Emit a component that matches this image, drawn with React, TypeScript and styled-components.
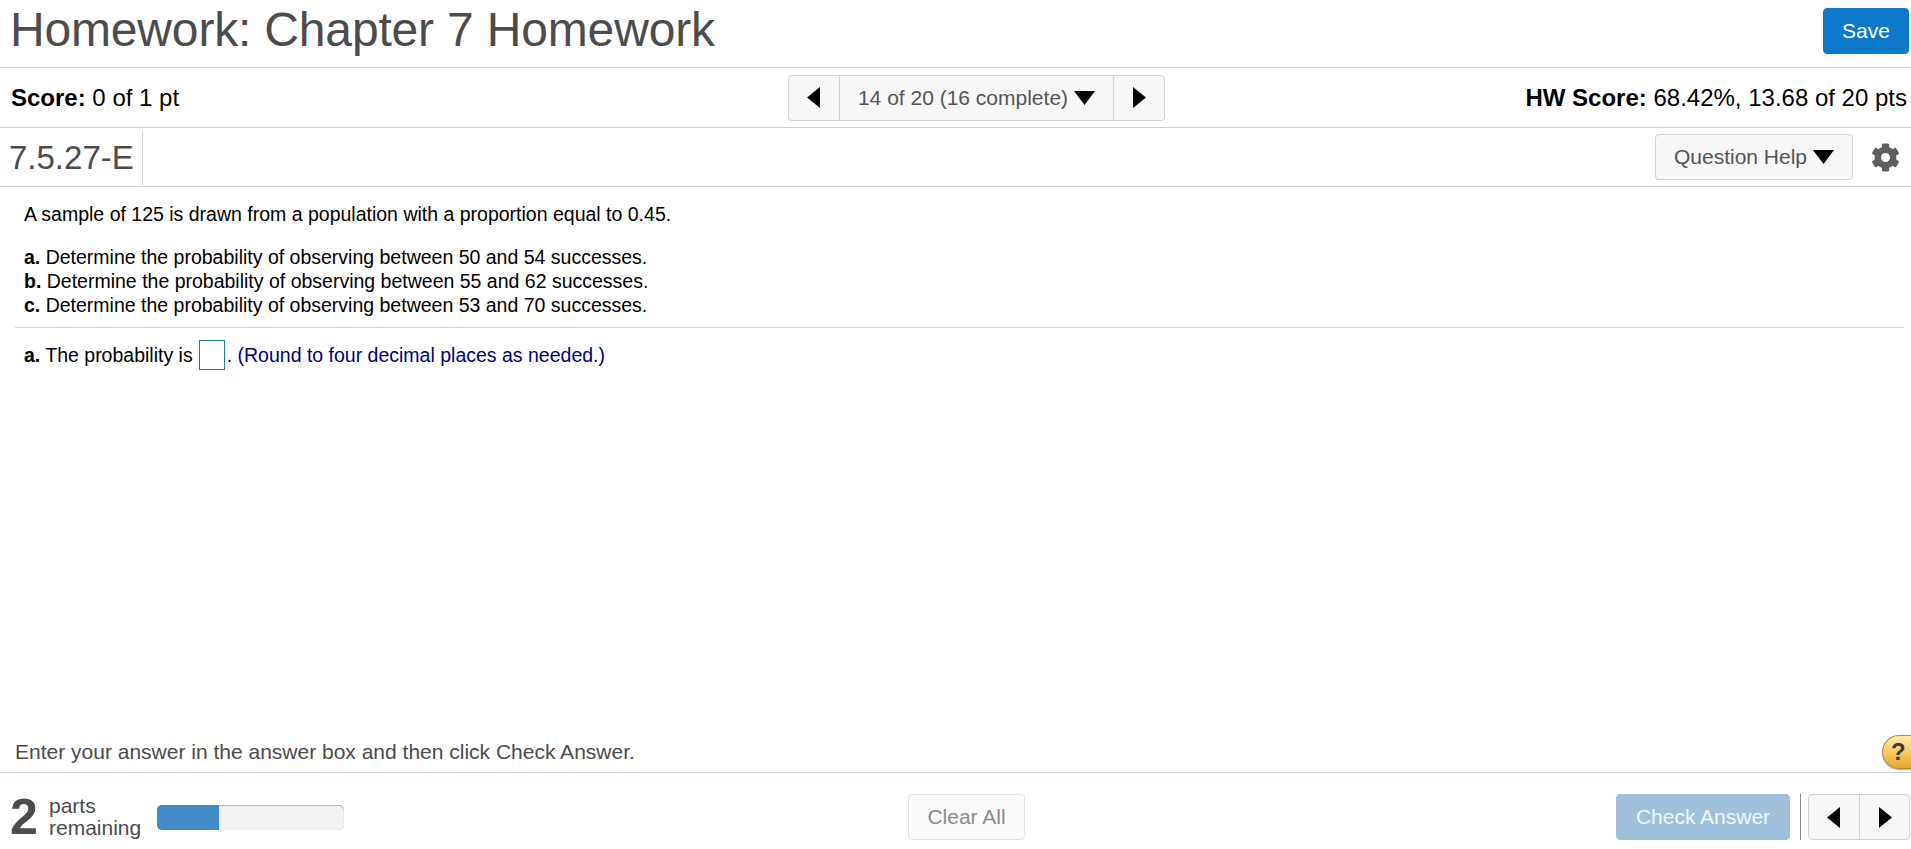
import React from "react";
import styled, { createGlobalStyle } from "styled-components";
import { FaCog } from "react-icons/fa";

const Global = createGlobalStyle`
  html, body { margin: 0; padding: 0; height: 100%; background: #fff; }
  body { font-family: "Liberation Sans", Arial, sans-serif; overflow: hidden; }
  * { box-sizing: border-box; }
`;

const Page = styled.div`
  height: 849px;
  display: flex;
  flex-direction: column;
`;

const Row = styled.div<{ $h: number }>`
  height: ${(p) => p.$h}px;
  flex: none;
  display: flex;
  align-items: center;
  border-bottom: 1px solid #cfd0dd;
`;

const TitleRow = styled(Row)`
  justify-content: space-between;
  padding: 0 2px 5px 10px;
`;

const Title = styled.h1`
  margin: 0 0 2px;
  font-size: 48px;
  font-weight: 400;
  line-height: 60px;
  letter-spacing: -0.17px;
  color: #4c4c4c;
`;

const BaseButton = styled.button`
  height: 46px;
  border-radius: 4px;
  font-family: inherit;
  font-size: 21px;
  padding: 0;
`;

const SaveButton = styled(BaseButton)`
  width: 86px;
  background: #0f79c9;
  border: 1px solid #0f79c9;
  color: #fff;
`;

const ScoreRow = styled(Row)`
  display: grid;
  grid-template-columns: 777px auto 1fr;
  padding: 0 4px 0 11px;
`;

const Score = styled.div<{ $right?: boolean }>`
  font-size: 24px;
  color: #000;
  text-align: ${(p) => (p.$right ? "right" : "left")};
  b { font-weight: 700; }
`;

const Group = styled.div`
  display: flex;
  height: 46px;
  border: 1px solid #d2d2d2;
  border-radius: 4px;
  background: #f7f7f7;
`;

const GroupCell = styled.div<{ $w: number; $sep?: boolean }>`
  width: ${(p) => p.$w}px;
  display: flex;
  align-items: center;
  justify-content: center;
  gap: 6px;
  font-size: 21px;
  color: #555;
  border-left: ${(p) => (p.$sep ? "1px solid #d2d2d2" : "none")};
`;

const Arrow = styled.svg`
  display: block;
  flex: none;
`;

const Left = () => (
  <Arrow width="14" height="21" viewBox="0 0 14 21"><path d="M13 0v21L0 10.500z" fill="#000" /></Arrow>
);
const Right = () => (
  <Arrow width="14" height="21" viewBox="0 0 14 21"><path d="M1 0v21l13-10.500z" fill="#000" /></Arrow>
);
const Down = () => (
  <Arrow width="21" height="14" viewBox="0 0 21 14"><path d="M0 0h21L10.500 14z" fill="#000" /></Arrow>
);

const QuestionRow = styled(Row)`
  justify-content: space-between;
  padding: 0 11px 0 9px;
`;

const QuestionId = styled.div`
  height: 54px;
  margin-top: 2px;
  padding-right: 8px;
  border-right: 1px solid #d4d4d4;
  font-size: 33px;
  line-height: 54px;
  color: #4c4c4c;
`;

const QuestionTools = styled.div`
  display: flex;
  align-items: center;
  gap: 18px;
`;

const HelpButton = styled(BaseButton)`
  width: 198px;
  background: #f7f7f7;
  border: 1px solid #d2d2d2;
  color: #555;
  display: flex;
  align-items: center;
  justify-content: center;
  gap: 6px;
`;

const Gear = styled(FaCog)`
  display: block;
  width: 29px;
  height: 29px;
  color: #5f5f5f;
`;

const Body = styled.main`
  flex: 1;
  display: flex;
  flex-direction: column;
`;

const Question = styled.div`
  font-size: 19.5px;
  line-height: 24px;
  color: #000;
  border-bottom: 1px solid #d2d4dc;
  margin: 0 7px 0 15px;
  padding: 15px 0 10px 9px;
  b { font-weight: 700; }
`;

const Para = styled.p`
  margin: 0 0 19px;
  &:last-child { margin-bottom: 0; }
`;

const Answer = styled.div`
  padding: 12px 0 0 24px;
  font-size: 19.5px;
  line-height: 30px;
  color: #000;
  display: flex;
  align-items: center;
  b { font-weight: 700; margin-right: 5px; }
`;

const AnswerBox = styled.span`
  width: 26px;
  height: 30px;
  margin: 0 2px 0 6px;
  border: 1px solid #1d7ea8;
  background: #fff;
`;

const Hint = styled.span`
  color: #000080;
`;

const Prompt = styled.div`
  flex: none;
  height: 52px;
  padding: 10px 0 0 15px;
  display: flex;
  align-items: center;
  justify-content: space-between;
  font-size: 21px;
  color: #4c4c4c;
  border-bottom: 1px solid #c9d0e0;
  overflow: hidden;
`;

const HelpBall = styled.div`
  width: 29px;
  height: 34px;
  border-radius: 17px 0 0 17px;
  background: linear-gradient(#fdeaa8, #f6c95c 55%, #e4a531);
  border: 1px solid #b98a2c;
  border-right: 0;
  box-shadow: 0 1px 1px rgba(0, 0, 0, 0.3);
  color: #3a3a3a;
  font-weight: 700;
  font-size: 24px;
  line-height: 32px;
  padding-left: 8px;
`;

const Footer = styled.footer`
  flex: none;
  height: 76px;
  display: grid;
  grid-template-columns: 898px auto 1fr;
  align-items: center;
  padding: 12px 1px 0 10px;
`;

const Parts = styled.div`
  display: flex;
  align-items: center;
`;

const PartsCount = styled.div`
  font-size: 50px;
  font-weight: 700;
  color: #4c4c4c;
  line-height: 50px;
  width: 28px;
`;

const PartsLabel = styled.div`
  margin-left: 11px;
  font-size: 21px;
  line-height: 22px;
  color: #4c4c4c;
`;

const Progress = styled.div`
  width: 187px;
  height: 25px;
  margin-left: 16px;
  background: #f2f2f2;
  border-radius: 5px;
  overflow: hidden;
  box-shadow: inset 0 1px 1px rgba(0, 0, 0, 0.25), inset 0 0 1px rgba(0, 0, 0, 0.2);
`;

const ProgressFill = styled.div<{ $pct: number }>`
  width: ${(p) => p.$pct}%;
  height: 100%;
  background: #428bca;
`;

const ClearButton = styled(BaseButton)`
  width: 117px;
  background: #fafafa;
  border: 1px solid #e2e2e2;
  color: #8c8c8c;
`;

const FooterRight = styled.div`
  display: flex;
  justify-content: flex-end;
  align-items: center;
`;

const CheckButton = styled(BaseButton)`
  width: 174px;
  background: #9fc1db;
  border: 1px solid #9fc1db;
  color: #f0f6fb;
`;

const Divider = styled.div`
  width: 1px;
  height: 46px;
  margin: 0 7px 0 10px;
  background: #8a8a8a;
`;

export default function App() {
  return (
    <Page>
      <Global />
      <TitleRow $h={68}>
        <Title>Homework: Chapter 7 Homework</Title>
        <SaveButton>Save</SaveButton>
      </TitleRow>
      <ScoreRow $h={60}>
        <Score><b>Score:</b> 0 of 1 pt</Score>
        <Group>
          <GroupCell $w={50}><Left /></GroupCell>
          <GroupCell $w={274} $sep>14 of 20 (16 complete)<Down /></GroupCell>
          <GroupCell $w={51} $sep><Right /></GroupCell>
        </Group>
        <Score $right><b>HW Score:</b> 68.42%, 13.68 of 20 pts</Score>
      </ScoreRow>
      <QuestionRow $h={59}>
        <QuestionId>7.5.27-E</QuestionId>
        <QuestionTools>
          <HelpButton>Question Help<Down /></HelpButton>
          <Gear />
        </QuestionTools>
      </QuestionRow>
      <Body>
        <Question>
          <Para>A sample of 125 is drawn from a population with a proportion equal to 0.45.</Para>
          <Para>
            <b>a.</b> Determine the probability of observing between 50 and 54 successes.<br />
            <b>b.</b> Determine the probability of observing between 55 and 62 successes.<br />
            <b>c.</b> Determine the probability of observing between 53 and 70 successes.
          </Para>
        </Question>
        <Answer>
          <b>a.</b> The probability is<AnswerBox />.&nbsp;<Hint>(Round to four decimal places as needed.)</Hint>
        </Answer>
      </Body>
      <Prompt>
        Enter your answer in the answer box and then click Check Answer.
        <HelpBall>?</HelpBall>
      </Prompt>
      <Footer>
        <Parts>
          <PartsCount>2</PartsCount>
          <PartsLabel>parts<br />remaining</PartsLabel>
          <Progress><ProgressFill $pct={33} /></Progress>
        </Parts>
        <ClearButton>Clear All</ClearButton>
        <FooterRight>
          <CheckButton>Check Answer</CheckButton>
          <Divider />
          <Group>
            <GroupCell $w={50}><Left /></GroupCell>
            <GroupCell $w={50} $sep><Right /></GroupCell>
          </Group>
        </FooterRight>
      </Footer>
    </Page>
  );
}
